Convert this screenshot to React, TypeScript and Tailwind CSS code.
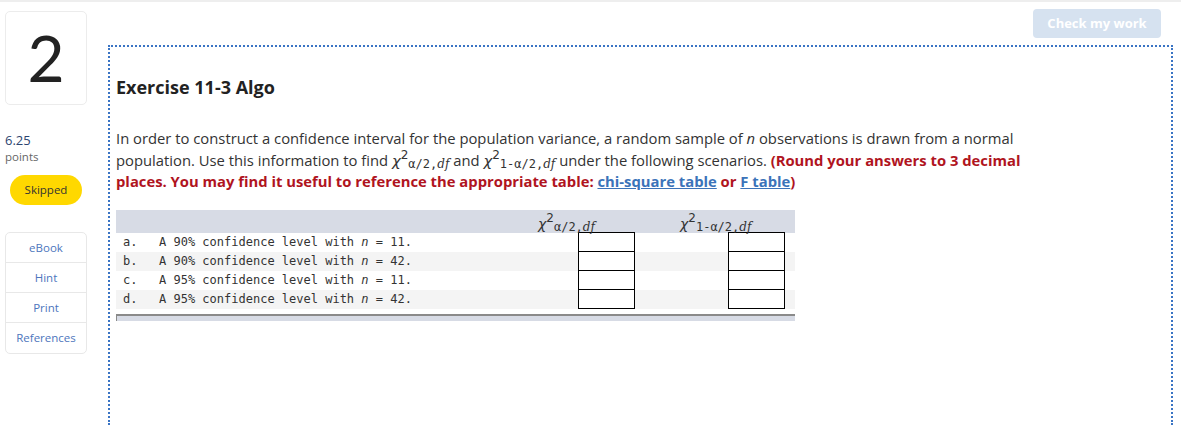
import React from 'react';

const rows = [
  { key: 'a.', pct: '90%', n: '11' },
  { key: 'b.', pct: '90%', n: '42' },
  { key: 'c.', pct: '95%', n: '11' },
  { key: 'd.', pct: '95%', n: '42' },
];

// chi-square symbol with superscript 2 and subscript
const Chi = ({ sub }: { sub: string }) => (
  <span className="font-['DejaVu_Sans',sans-serif] italic font-normal">
    χ<sup className="not-italic text-[12px] top-[-0.55em]">2</sup>
    <sub className="text-[12px] font-['DejaVu_Sans_Mono',monospace] not-italic bottom-[-0.2em]">
      {sub}
      <span className="italic font-['DejaVu_Serif',serif]">df</span>
    </sub>
  </span>
);

const SideButton = ({ label, last }: { label: string; last?: boolean }) => (
  <div
    className={`h-[30px] flex items-center justify-center text-[11.5px] text-[#4d76bd] ${
      last ? '' : 'border-b border-[#e8e8e8]'
    }`}
  >
    {label}
  </div>
);

export default function App() {
  return (
    <div className="w-[1181px] h-[425px] bg-white border-t-2 border-[#eeeeee] flex overflow-hidden font-['Open_Sans',sans-serif]">
      {/* left column */}
      <div className="w-[108px] shrink-0 pl-[5px] pt-[9px]">
        <div className="w-[82px] h-[94px] border border-[#ececec] rounded-[5px] flex items-center justify-center">
          <span className="text-[64px] leading-none text-[#222] font-normal font-['Lato',sans-serif]">2</span>
        </div>
        <div className="mt-[27px] text-[13px] leading-[17px] text-[#2d4470]">6.25</div>
        <div className="text-[11.5px] leading-[15px] text-[#666]">points</div>
        <div className="mt-[11px] ml-[5px] w-[72px] h-[30px] rounded-full bg-[#ffd800] flex items-center justify-center text-[11.5px] text-[#333]">
          Skipped
        </div>
        <div className="mt-[27px] w-[82px] border border-[#e8e8e8] rounded-[5px]">
          <SideButton label="eBook" />
          <SideButton label="Hint" />
          <SideButton label="Print" />
          <SideButton label="References" last />
        </div>
      </div>

      {/* main column */}
      <div className="flex-1 flex flex-col pr-[8px]">
        <div className="h-[43px] flex items-start justify-end pt-[7px] pr-[12px]">
          <div className="w-[128px] h-[29px] rounded-[4px] bg-[#d6e2f0] flex items-center justify-center text-white text-[13px] font-bold">
            Check my work
          </div>
        </div>
        <div className="flex-1 border-2 border-b-0 border-dotted border-[#3a74c4] pl-[6px] pt-[29px]">
          <h2 className="text-[18px] font-bold text-[#222] leading-[22px]">Exercise 11-3 Algo</h2>
          <p className="mt-[30px] text-[14.8px] leading-[21.5px] text-[#333] w-[908px]">
            In order to construct a confidence interval for the population variance, a random sample of{' '}
            <i>n</i> observations is drawn from a normal population. Use this information to find{' '}
            <Chi sub="α/2," /> and <Chi sub="1-α/2," /> under the following scenarios.{' '}
            <b className="text-[#b0141e]">
              (Round your answers to 3 decimal places. You may find it useful to reference the appropriate table:{' '}
              <span className="text-[#3b73b9] underline">chi-square table</span> or{' '}
              <span className="text-[#3b73b9] underline">F table</span>)
            </b>
          </p>

          <div className="mt-[17px] w-[679px]">
            <div className="h-[23px] bg-[#d7dbe5] flex items-end text-[14px] text-[#333]">
              <span className="ml-[422px] w-[142px] leading-[18px]">
                <Chi sub="α/2," />
              </span>
              <span className="leading-[18px]">
                <Chi sub="1-α/2," />
              </span>
            </div>
            {rows.map((r, i) => (
              <div
                key={r.key}
                className={`h-[19px] flex items-center font-['DejaVu_Sans_Mono',monospace] text-[12px] text-[#333] ${
                  i % 2 ? 'bg-[#f4f4f4]' : 'bg-white'
                }`}
              >
                <span className="pl-[7px] w-[43px]">{r.key}</span>
                <span className="w-[419px]">
                  A {r.pct} confidence level with <i>n</i> = {r.n}.
                </span>
                <div className="w-[57px] h-[20px] border border-black bg-white -mt-[1px]" />
                <div className="w-[93px]" />
                <div className="w-[57px] h-[20px] border border-black bg-white -mt-[1px]" />
              </div>
            ))}
            <div className="mt-[5px] h-[7px] bg-[#d7dbe5] border-t-2 border-l border-[#8a8a8a]" />
          </div>
        </div>
      </div>
    </div>
  );
}
